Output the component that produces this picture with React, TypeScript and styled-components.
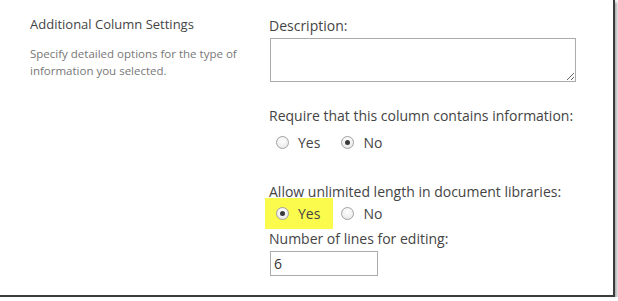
import styled, { createGlobalStyle } from "styled-components";

const GlobalStyle = createGlobalStyle`
  html, body {
    margin: 0;
    padding: 0;
    background: #ffffff;
  }
  body {
    font-family: "Open Sans", "Noto Sans", sans-serif;
  }
`;

const Frame = styled.div`
  width: 615px;
  height: 297px;
  background: #ffffff;
  border-right: 2px solid #3c3c3c;
  border-bottom: 2px solid #3c3c3c;
  box-shadow: 2px 2px 3px rgba(0, 0, 0, 0.35);
  display: grid;
  grid-template-columns: 239px 1fr;
  align-items: start;
  padding-left: 30px;
  box-sizing: border-box;
  overflow: hidden;
`;

const Side = styled.div`
  padding-top: 15px;
`;

const SectionTitle = styled.div`
  font-size: 13px;
  color: #444444;
  line-height: 18px;
`;

const SectionHint = styled.div`
  margin-top: 12px;
  font-size: 11.5px;
  color: #777777;
  line-height: 17px;
  width: 215px;
`;

const Fields = styled.div`
  padding-top: 16px;
  display: flex;
  flex-direction: column;
`;

const Label = styled.div<{ $gap?: number }>`
  font-size: 14px;
  color: #444444;
  line-height: 20px;
  margin-top: ${(p) => p.$gap ?? 0}px;
`;

const TextArea = styled.textarea`
  display: block;
  margin: 2px 0 0 1px;
  width: 306px;
  height: 44px;
  box-sizing: border-box;
  border: 1px solid #ababab;
  resize: both;
  font: inherit;
`;

const RadioRow = styled.div<{ $gap?: number }>`
  display: flex;
  align-items: center;
  margin: ${(p) => p.$gap ?? 0}px 0 0 -4px;
  height: 26px;
`;

const Choice = styled.label<{ $marked?: boolean }>`
  display: flex;
  align-items: center;
  gap: 9px;
  height: 31px;
  padding: 0 13px 0 8px;
  background: ${(p) => (p.$marked ? "#fbfb4d" : "transparent")};
  font-size: 14px;
  color: #444444;
  &:first-child {
    padding-left: 11px;
  }
`;

const Dot = styled.span<{ $on?: boolean }>`
  width: 13px;
  height: 13px;
  box-sizing: border-box;
  border-radius: 50%;
  border: 1px solid #a2a2a2;
  background: radial-gradient(circle at 50% 35%, #ffffff 0%, #ececec 70%, #dcdcdc 100%);
  display: flex;
  align-items: center;
  justify-content: center;
  &::after {
    content: "";
    width: 5px;
    height: 5px;
    border-radius: 50%;
    background: ${(p) => (p.$on ? "#3a3a3a" : "transparent")};
  }
`;

const TextInput = styled.input`
  display: block;
  margin: 2px 0 0 1px;
  width: 108px;
  height: 25px;
  box-sizing: border-box;
  border: 1px solid #ababab;
  padding: 0 3px;
  font: inherit;
  font-size: 14px;
  color: #333333;
`;

export default function App() {
  return (
    <>
      <GlobalStyle />
      <Frame>
        <Side>
          <SectionTitle>Additional Column Settings</SectionTitle>
          <SectionHint>
            Specify detailed options for the type of information you selected.
          </SectionHint>
        </Side>
        <Fields>
          <Label>Description:</Label>
          <TextArea defaultValue="" />
          <Label $gap={24}>Require that this column contains information:</Label>
          <RadioRow $gap={3}>
            <Choice>
              <Dot />
              Yes
            </Choice>
            <Choice>
              <Dot $on />
              No
            </Choice>
          </RadioRow>
          <Label $gap={27}>Allow unlimited length in document libraries:</Label>
          <RadioRow $gap={-2}>
            <Choice $marked>
              <Dot $on />
              Yes
            </Choice>
            <Choice>
              <Dot />
              No
            </Choice>
          </RadioRow>
          <Label $gap={3}>Number of lines for editing:</Label>
          <TextInput defaultValue="6" />
        </Fields>
      </Frame>
    </>
  );
}
